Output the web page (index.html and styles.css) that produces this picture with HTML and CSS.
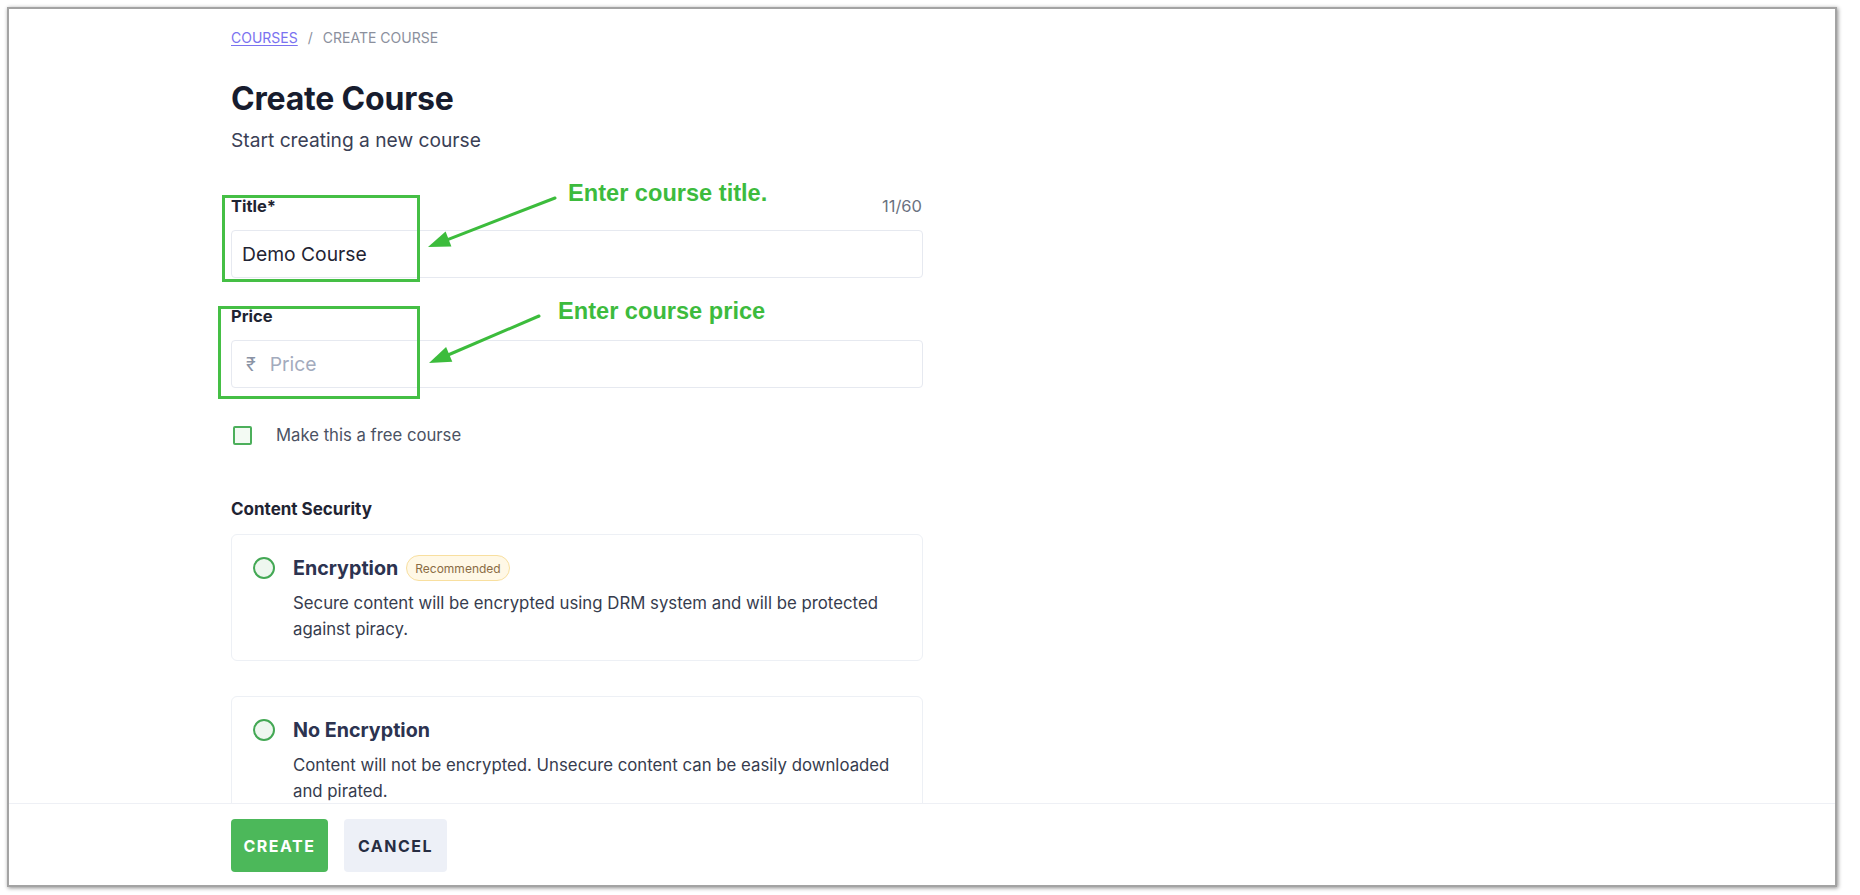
FILE: index.html
```html
<!DOCTYPE html>
<html lang="en">
<head>
<meta charset="utf-8">
<title>Create Course</title>
<link rel="stylesheet" href="styles.css">
</head>
<body>
<div class="frame">
  <div class="main">
    <div class="form">
      <nav class="crumbs"><a class="crumb-link" href="#">COURSES</a><span class="crumb-sep">/</span><span class="crumb-current">CREATE COURSE</span></nav>
      <h1 class="title">Create Course</h1>
      <p class="subtitle">Start creating a new course</p>

      <div class="field field-title">
        <div class="label-row"><span class="label">Title*</span><span class="counter">11/60</span></div>
        <div class="input"><span class="input-value">Demo Course</span></div>
      </div>

      <div class="field field-price">
        <div class="label-row"><span class="label">Price</span></div>
        <div class="input input-price"><span class="rupee">₹</span><span class="placeholder">Price</span></div>
      </div>

      <label class="check-row"><span class="checkbox"></span><span class="check-text">Make this a free course</span></label>

      <div class="section-label">Content Security</div>

      <div class="card">
        <div class="card-head"><span class="radio"></span><span class="card-title">Encryption</span><span class="badge">Recommended</span></div>
        <p class="card-desc">Secure content will be encrypted using DRM system and will be protected against piracy.</p>
      </div>

      <div class="card card-second">
        <div class="card-head"><span class="radio"></span><span class="card-title">No Encryption</span></div>
        <p class="card-desc">Content will not be encrypted. Unsecure content can be easily downloaded and pirated.</p>
      </div>
    </div>
  </div>
  <div class="footer">
    <button class="btn btn-primary">CREATE</button>
    <button class="btn btn-secondary">CANCEL</button>
  </div>
</div>

<div class="annot">
  <svg class="annot-svg" width="1860" height="895" viewBox="0 0 1860 895">
    <rect x="223.5" y="196.5" width="195" height="84" fill="none" stroke="#45bf45" stroke-width="3"/>
    <rect x="219.5" y="307.5" width="199" height="90" fill="none" stroke="#45bf45" stroke-width="3"/>
    <line x1="555" y1="198" x2="447" y2="239.8" stroke="#3cbc3c" stroke-width="3" stroke-linecap="round"/>
    <polygon points="428,247 451.4,246.6 445.6,231.6" fill="#3cbc3c"/>
    <line x1="539" y1="316" x2="448" y2="355" stroke="#3cbc3c" stroke-width="3" stroke-linecap="round"/>
    <polygon points="429,363 452.3,361.8 446.1,347" fill="#3cbc3c"/>
  </svg>
  <div class="note note-title">Enter course title.</div>
  <div class="note note-price">Enter course price</div>
</div>
</body>
</html>
```

FILE: styles.css
```css
* { box-sizing: border-box; }

html, body {
  margin: 0;
  padding: 0;
  background: #ffffff;
}

body {
  position: relative;
  width: 1860px;
  height: 895px;
  overflow: hidden;
  font-family: Inter, "Open Sans", "Liberation Sans", sans-serif;
  color: #1f2433;
}

.frame {
  margin: 7px 0 0 7px;
  width: 1830px;
  height: 880px;
  border: 2px solid #a3a3a3;
  box-shadow: 1px 1px 4px rgba(0, 0, 0, 0.45);
  background: #ffffff;
  display: flex;
  flex-direction: column;
}

.main {
  flex: 1;
  overflow: hidden;
  padding: 19px 0 0 222px;
}

.form {
  width: 692px;
}

.crumbs {
  display: flex;
  align-items: center;
  font-size: 14px;
  line-height: 20px;
  color: #8b909d;
}

.crumb-link {
  color: #7a72f0;
  text-decoration: underline;
  text-underline-offset: 2px;
}

.crumb-sep {
  margin: 0 10px;
}

.title {
  margin: 31px 0 0;
  font-size: 32px;
  line-height: 40px;
  font-weight: 700;
  color: #171c2e;
  letter-spacing: -0.2px;
}

.subtitle {
  margin: 8px 0 0;
  font-size: 19.2px;
  line-height: 26px;
  color: #3a4055;
}

.field-title {
  margin-top: 42px;
}

.field-price {
  margin-top: 27px;
}

.label-row {
  display: flex;
  justify-content: space-between;
  align-items: center;
  height: 22px;
}

.label {
  font-size: 16.5px;
  font-weight: 700;
  color: #1f2433;
}

.counter {
  font-size: 16.5px;
  color: #6b7280;
  margin-right: 1px;
}

.input {
  margin-top: 13px;
  height: 48px;
  border: 1px solid #e6e9f0;
  border-radius: 4px;
  display: flex;
  align-items: center;
  padding: 0 10px;
  font-size: 19.3px;
  color: #1f2433;
}

.input-price {
  padding-left: 14px;
}

.rupee {
  font-size: 18px;
  color: #8a93a5;
  margin-right: 14px;
}

.placeholder {
  color: #a3abbd;
}

.check-row {
  margin-top: 37px;
  display: flex;
  align-items: center;
  height: 20px;
  padding-left: 2px;
}

.checkbox {
  width: 19px;
  height: 19px;
  border: 2px solid #4caf5b;
  border-radius: 2px;
  background: #f3faf3;
}

.check-text {
  margin-left: 24px;
  font-size: 16.7px;
  color: #4b5263;
}

.section-label {
  margin-top: 53px;
  font-size: 17px;
  line-height: 22px;
  font-weight: 700;
  color: #1f2433;
}

.card {
  margin-top: 14px;
  border: 1px solid #edf0f5;
  border-radius: 6px;
  padding: 20px 21px 18px 21px;
}

.card-second {
  margin-top: 35px;
}

.card-head {
  display: flex;
  align-items: center;
  height: 26px;
}

.radio {
  width: 22px;
  height: 22px;
  border: 2px solid #43a854;
  border-radius: 50%;
  background: #eef7ef;
  flex: none;
}

.card-title {
  margin-left: 18px;
  font-size: 19.7px;
  font-weight: 700;
  color: #2c3350;
}

.badge {
  margin-left: 8px;
  height: 26px;
  padding: 0 8px;
  display: flex;
  align-items: center;
  border: 1.5px solid #f8df9f;
  border-radius: 13px;
  background: #fff8e6;
  font-size: 12px;
  color: #8a6c44;
}

.card-desc {
  margin: 9px 0 0 40px;
  font-size: 16.8px;
  line-height: 26px;
  color: #363c4e;
}

.footer {
  height: 82px;
  border-top: 1px solid #eef0f5;
  padding: 15px 0 0 222px;
  display: flex;
  align-items: flex-start;
  gap: 16px;
}

.btn {
  height: 53px;
  border: none;
  border-radius: 4px;
  padding: 0;
  font-family: Inter, "Open Sans", "Liberation Sans", sans-serif;
  font-size: 16px;
  font-weight: 700;
  letter-spacing: 1.5px;
}

.btn-primary {
  width: 97px;
  background: #4cb85a;
  color: #ffffff;
}

.btn-secondary {
  width: 103px;
  background: #edf0f7;
  color: #272d42;
}

.annot {
  position: absolute;
  left: 0;
  top: 0;
  width: 1860px;
  height: 895px;
  pointer-events: none;
}

.annot-svg {
  position: absolute;
  left: 0;
  top: 0;
}

.note {
  position: absolute;
  font-family: "Liberation Sans", Arial, sans-serif;
  font-weight: 700;
  font-size: 23.6px;
  line-height: 28px;
  color: #3dbb3d;
  white-space: nowrap;
}

.note-title {
  left: 568px;
  top: 179px;
}

.note-price {
  left: 558px;
  top: 297px;
}
```
